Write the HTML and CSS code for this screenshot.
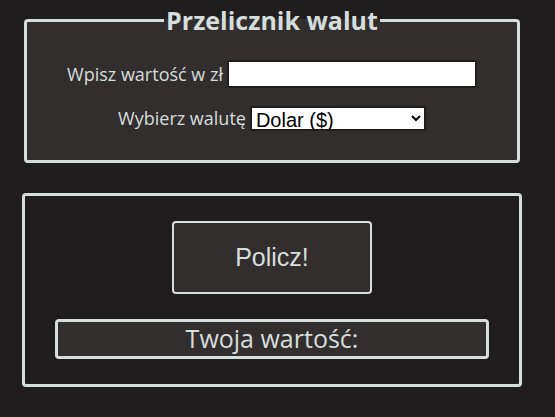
FILE: index.html
```html
<!DOCTYPE html>
<html lang="pl">
<head>
<meta charset="utf-8">
<title>Przelicznik walut</title>
<link rel="stylesheet" href="styles.css">
</head>
<body>
<main class="wrap">
  <fieldset class="panel">
    <legend class="title">Przelicznik walut</legend>
    <div class="row">
      <label for="val">Wpisz wartość w zł</label>
      <input id="val" class="field" type="text">
    </div>
    <div class="row">
      <label for="cur">Wybierz walutę</label>
      <select id="cur" class="picker">
        <option>Dolar ($)</option>
        <option>Euro (€)</option>
        <option>Funt (£)</option>
      </select>
    </div>
  </fieldset>
  <section class="result">
    <button class="calc" type="button">Policz!</button>
    <div class="output">Twoja wartość:</div>
  </section>
</main>
</body>
</html>
```
FILE: styles.css
```css
html, body {
  margin: 0;
  padding: 0;
  background: #1f1d1e;
}
body {
  font-family: "Open Sans", sans-serif;
  color: #d6dedd;
}
.wrap {
  width: 500px;
  margin-left: 22px;
  padding-top: 7px;
  display: flex;
  flex-direction: column;
}
.panel {
  margin: 0 2px;
  padding: 27px 0 29px;
  border: 3px solid #d6dedd;
  border-radius: 4px;
  background: #322e2d;
  display: flex;
  flex-direction: column;
  align-items: center;
  gap: 18px;
}
.title {
  font-weight: 700;
  font-size: 25px;
  line-height: 26px;
  padding: 0 2px;
  margin: 0 auto;
}
.row {
  display: flex;
  align-items: center;
  gap: 4px;
  font-size: 18px;
  line-height: 25px;
}
.field {
  width: 250px;
  height: 28px;
  box-sizing: border-box;
  border: 2px solid #1f1d1e;
  background: #fff;
  font-size: 16px;
  padding: 0 4px;
}
.picker {
  width: 176px;
  height: 25px;
  box-sizing: border-box;
  border: 2px solid #1f1d1e;
  background: #fff;
  font-family: "Liberation Sans", Arial, sans-serif;
  font-size: 20px;
  color: #000;
  padding: 0;
}
.result {
  margin-top: 30px;
  border: 3px solid #d6dedd;
  border-radius: 4px;
  padding: 25px 0 25px;
  display: flex;
  flex-direction: column;
  align-items: center;
  gap: 25px;
}
.calc {
  width: 200px;
  height: 73px;
  border: 2px solid #d6dedd;
  border-radius: 4px;
  background: #322e2d;
  color: #d6dedd;
  font-family: "Liberation Sans", Arial, sans-serif;
  font-size: 25px;
}
.output {
  width: 434px;
  height: 40px;
  box-sizing: border-box;
  border: 3px solid #d6dedd;
  border-radius: 4px;
  background: #322e2d;
  font-size: 25px;
  line-height: 32px;
  text-align: center;
}
```
